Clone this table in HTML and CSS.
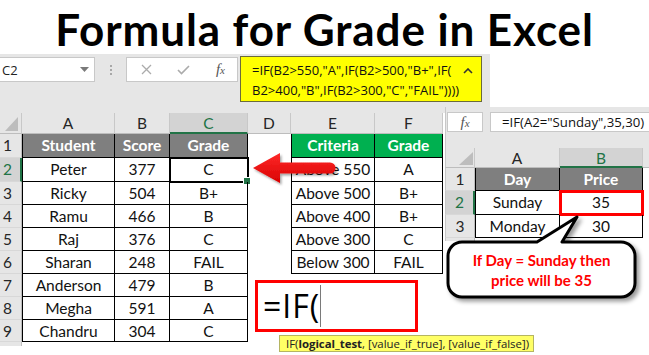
FILE: index.html
```html
<!DOCTYPE html>
<html>
<head>
<meta charset="utf-8">
<title>Formula for Grade in Excel</title>
<link rel="stylesheet" href="styles.css">
</head>
<body>
<div class="canvas">
  <h1 class="title">Formula for Grade in Excel</h1>
  <div class="panels">
    <section class="sheet">
      <div class="fbar">
        <div class="namebox"><span class="ref">C2</span><svg class="dd" width="9" height="5" viewBox="0 0 9 5"><path d="M0 0H9L4.5 5Z" fill="#7a7a7a"/></svg></div>
        <div class="grip"><i></i><i></i><i></i></div>
        <div class="fbtns">
          <svg width="11" height="11" viewBox="0 0 11 11"><path d="M1 1L10 10M10 1L1 10" stroke="#ababab" stroke-width="1.3"/></svg>
          <svg width="13" height="10" viewBox="0 0 13 10"><path d="M1 5L4.5 8.5L12 1" stroke="#ababab" stroke-width="1.6" fill="none"/></svg>
          <span class="fx">f<span class="fxx">x</span></span>
        </div>
        <div class="formula-y">
          <div class="ftext">=IF(B2&gt;550,"A",IF(B2&gt;500,"B+",IF(<br>B2&gt;400,"B",IF(B2&gt;300,"C","FAIL"))))</div>
          <svg class="collapse" width="10" height="6" viewBox="0 0 10 6"><path d="M1 5L5 1L9 5" stroke="#333" stroke-width="1.6" fill="none"/></svg>
        </div>
      </div>
      <div class="grid">
        <div class="corner"><svg width="22" height="21" viewBox="0 0 22 21"><path d="M5 18H18V4Z" fill="#bdbdbd"/></svg></div>
        <div class="ch">A</div><div class="ch">B</div><div class="ch ch-sel">C</div><div class="ch">D</div><div class="ch">E</div><div class="ch">F</div>

        <div class="rh">1</div><div class="c hd bl">Student</div><div class="c hd">Score</div><div class="c hd">Grade</div><div class="blank"></div><div class="c hg bl">Criteria</div><div class="c hg">Grade</div>
        <div class="rh rh-sel">2</div><div class="c bl">Peter</div><div class="c">377</div><div class="c sel">C</div><div class="blank"></div><div class="c bl">Above 550</div><div class="c">A</div>
        <div class="rh">3</div><div class="c bl">Ricky</div><div class="c">504</div><div class="c">B+</div><div class="blank"></div><div class="c bl">Above 500</div><div class="c">B+</div>
        <div class="rh">4</div><div class="c bl">Ramu</div><div class="c">466</div><div class="c">B</div><div class="blank"></div><div class="c bl">Above 400</div><div class="c">B+</div>
        <div class="rh">5</div><div class="c bl">Raj</div><div class="c">376</div><div class="c">C</div><div class="blank"></div><div class="c bl">Above 300</div><div class="c">C</div>
        <div class="rh">6</div><div class="c bl">Sharan</div><div class="c">248</div><div class="c">FAIL</div><div class="blank"></div><div class="c bl">Below 300</div><div class="c">FAIL</div>
        <div class="rh">7</div><div class="c bl">Anderson</div><div class="c">479</div><div class="c">B</div><div class="blank"></div><div class="blank"></div><div class="blank"></div>
        <div class="rh">8</div><div class="c bl">Megha</div><div class="c">591</div><div class="c">A</div><div class="blank"></div><div class="blank"></div><div class="blank"></div>
        <div class="rh">9</div><div class="c bl">Chandru</div><div class="c">304</div><div class="c">C</div><div class="blank"></div><div class="blank"></div><div class="blank"></div>
        <div class="rh rh-tail"></div>
      </div>
    </section>

    <section class="side">
      <div class="fbar-side">
        <div class="fxbox"><span class="fx">f<span class="fxx">x</span></span></div>
        <div class="finput">=IF(A2="Sunday",35,30)</div>
      </div>
      <div class="grid-side">
        <div class="corner"><svg width="30" height="20" viewBox="0 0 30 20"><path d="M13 17H27V4Z" fill="#bdbdbd"/></svg></div>
        <div class="ch">A</div><div class="ch ch-sel">B</div><div class="ch ch-end"></div>
        <div class="rh">1</div><div class="c hd bl">Day</div><div class="c hd">Price</div><div class="blank"></div>
        <div class="rh rh-sel">2</div><div class="c bl">Sunday</div><div class="c red">35</div><div class="blank"></div>
        <div class="rh">3</div><div class="c bl">Monday</div><div class="c">30</div><div class="blank"></div>
        <div class="rh rh-tail"></div>
      </div>
    </section>
  </div>

  <svg class="arrow" width="92" height="42" viewBox="0 0 92 42">
    <defs>
      <linearGradient id="rg" x1="0" y1="0" x2="0" y2="1">
        <stop offset="0" stop-color="#ff2a2a"/>
        <stop offset="1" stop-color="#d80000"/>
      </linearGradient>
      <filter id="ash" x="-10%" y="-20%" width="130%" height="160%">
        <feDropShadow dx="1.5" dy="2" stdDeviation="1.2" flood-color="#000" flood-opacity="0.35"/>
      </filter>
    </defs>
    <path d="M3 20L30 5V14.5H80A5.5 5.5 0 0 1 80 25.5H30V35Z" fill="url(#rg)" filter="url(#ash)"/>
  </svg>

  <div class="bigformula"><span class="bf-text">=IF(</span><span class="cursor"></span></div>
  <div class="tip">IF(<b>logical_test</b>, [value_if_true], [value_if_false])</div>

  <div class="callout">
    <svg class="callout-shape" width="200" height="92" viewBox="0 0 200 92">
      <defs>
        <filter id="csh" x="-10%" y="-10%" width="125%" height="130%">
          <feDropShadow dx="3" dy="3" stdDeviation="2" flood-color="#000" flood-opacity="0.4"/>
        </filter>
      </defs>
      <path d="M17 28H92L132 3L117 28H176A14 14 0 0 1 190 42V69A14 14 0 0 1 176 83H17A14 14 0 0 1 3 69V42A14 14 0 0 1 17 28Z" fill="#fff" stroke="#000" stroke-width="3" stroke-linejoin="round" filter="url(#csh)"/>
    </svg>
    <p class="callout-text">If Day = Sunday then<br>price will be 35</p>
  </div>
</div>
</body>
</html>
```

FILE: styles.css
```css
* { box-sizing: border-box; }
html, body { margin: 0; padding: 0; background: #fff; }
body { width: 649px; height: 355px; overflow: hidden; }

.canvas {
  position: relative;
  width: 649px;
  height: 355px;
  font-family: "Lato", "Open Sans", sans-serif;
  color: #000;
}

.title {
  margin: 0;
  height: 54px;
  line-height: 58px;
  font-family: "Lato", sans-serif;
  font-weight: 700;
  font-size: 44px;
  text-align: center;
  letter-spacing: 0.9px;
  white-space: nowrap;
}

.panels { display: flex; align-items: flex-start; }

/* ---------- main sheet ---------- */
.sheet { width: 445px; flex-shrink: 0; }

.fbar {
  width: 490px;
  height: 59px;
  background: #e6e6e6;
  display: flex;
  align-items: flex-start;
  padding-top: 2px;
}
.fbar > * { flex-shrink: 0; }
.namebox {
  width: 95px;
  height: 25px;
  margin-top: 1px;
  background: #fff;
  border: 1px solid #c8c8c8;
  border-left: 0;
  display: flex;
  align-items: center;
  justify-content: space-between;
  padding: 0 5px 0 2px;
  font-family: "Open Sans", sans-serif;
  font-size: 13px;
  color: #222;
}
.grip {
  width: 31px;
  height: 25px;
  margin-top: 1px;
  display: flex;
  flex-direction: column;
  align-items: center;
  justify-content: center;
  gap: 2px;
}
.grip i { display: block; width: 2px; height: 2px; background: #a8a8a8; }
.fbtns {
  width: 112px;
  height: 25px;
  margin-top: 1px;
  background: #fff;
  border: 1px solid #c8c8c8;
  display: flex;
  align-items: center;
  padding: 0 12px 0 14px;
  justify-content: space-between;
}
.fx {
  font-family: "Liberation Serif", serif;
  font-style: italic;
  font-size: 15px;
  color: #555;
  line-height: 1;
}
.fxx { font-size: 11px; }
.formula-y {
  margin-left: 2px;
  width: 242px;
  height: 46px;
  background: #ffff00;
  border: 1px solid #6b6b3a;
  display: flex;
  justify-content: space-between;
  padding: 3px 8px 0 11px;
}
.ftext {
  font-family: "Open Sans", sans-serif;
  font-size: 13px;
  line-height: 20px;
  color: #111;
  white-space: nowrap;
}
.collapse { margin-top: 8px; }

.grid {
  display: grid;
  grid-template-columns: 22px 93px 55px 78px 43px 84px 68px;
  grid-template-rows: 21px 24px 24px 23px 23px 23px 23px 23px 23px 22px 4px;
  width: 445px;
  background: #fff;
}

.corner { background: #e6e6e6; border-right: 1px solid #c8c8c8; border-bottom: 1px solid #bdbdbd; }
.corner svg { display: block; }
.ch {
  background: #e6e6e6;
  border-right: 1px solid #c8c8c8;
  border-bottom: 1px solid #bdbdbd;
  text-align: center;
  font-size: 15.5px;
  line-height: 21px;
  color: #262626;
}
.ch-sel { background: #d3d3d3; color: #217346; border-bottom: 2px solid #217346; }
.rh {
  background: #e6e6e6;
  border-right: 1px solid #bdbdbd;
  border-bottom: 1px solid #d8d8d8;
  font-size: 15.5px;
  line-height: 22px;
  padding-left: 3px;
  color: #262626;
}
.rh-sel { background: #d3d3d3; color: #217346; border-right: 2px solid #217346; }
.rh-tail { border-bottom: 0; }

.c {
  position: relative;
  border-right: 1px solid #000;
  border-bottom: 1px solid #000;
  text-align: center;
  font-size: 15.5px;
  line-height: 22px;
  white-space: nowrap;
  color: #111;
}
.bl { border-left: 1px solid #000; }
.hd { background: #7f7f7f; color: #fff; font-weight: 700; }
.hg { background: #00b050; color: #fff; font-weight: 700; }
.sel { outline: 2px solid #000; outline-offset: -1px; }
.sel::after {
  content: "";
  position: absolute;
  right: -4px;
  bottom: -4px;
  width: 6px;
  height: 6px;
  background: #217346;
  border: 1px solid #fff;
}
.blank { background: #fff; }

/* ---------- side sheet ---------- */
.side {
  position: relative;
  width: 204px;
  flex-shrink: 0;
  margin-top: 53px;
}
.fbar-side {
  height: 41px;
  background: #e6e6e6;
  border-left: 1px solid #c8c8c8;
  display: flex;
  align-items: flex-start;
  padding-top: 5px;
}
.fxbox {
  width: 36px;
  height: 20px;
  margin-left: 1px;
  background: #fff;
  border: 1px solid #c8c8c8;
  display: flex;
  align-items: center;
  justify-content: center;
}
.finput {
  margin-left: 7px;
  flex: 1;
  height: 20px;
  background: #fff;
  border: 1px solid #c8c8c8;
  border-right: 0;
  font-family: "Open Sans", sans-serif;
  font-size: 13.2px;
  line-height: 18px;
  padding-left: 11px;
  color: #111;
  white-space: nowrap;
}
.grid-side {
  display: grid;
  grid-template-columns: 30px 85px 83px 6px;
  grid-template-rows: 20px 23px 24px 23px 3px;
  background: #fff;
}
.grid-side .corner { border-left: 1px solid #c8c8c8; }
.grid-side .ch { line-height: 20px; }
.grid-side .rh { text-align: center; padding-left: 0; border-left: 1px solid #c8c8c8; }
.ch-end { border-right: 0; }
.red { outline: 3px solid #ff0000; outline-offset: -2px; }

/* ---------- overlays ---------- */
.arrow { position: absolute; left: 250px; top: 148px; }

.bigformula {
  position: absolute;
  left: 255px;
  top: 280px;
  width: 163px;
  height: 52px;
  border: 3px solid #ff0000;
  background: #fff;
  display: flex;
  align-items: center;
  padding-left: 5px;
}
.bf-text {
  font-family: "Open Sans", sans-serif;
  font-size: 32px;
  letter-spacing: 1px;
  color: #000;
  line-height: 1;
}
.cursor { display: block; width: 1px; height: 42px; background: #7a7a7a; margin-left: 0; }

.tip {
  position: absolute;
  left: 279px;
  top: 335px;
  height: 17px;
  padding: 0 4px 0 6px;
  background: #ffff66;
  border: 1px solid #b5b562;
  font-family: "Open Sans", sans-serif;
  font-size: 11.4px;
  line-height: 15px;
  color: #222;
  white-space: nowrap;
}

.callout { position: absolute; left: 445px; top: 214px; width: 200px; height: 92px; }
.callout-shape { position: absolute; left: 0; top: 0; }
.callout-text {
  position: absolute;
  left: 3px;
  top: 28px;
  width: 187px;
  height: 55px;
  margin: 0;
  display: flex;
  align-items: center;
  justify-content: center;
  text-align: center;
  font-family: "Lato", sans-serif;
  font-weight: 700;
  font-size: 15px;
  line-height: 20px;
  color: #ff0000;
}
```
